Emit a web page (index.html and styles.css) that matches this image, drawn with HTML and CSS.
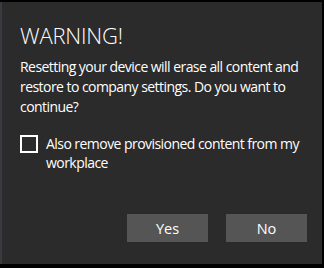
FILE: index.html
```html
<!DOCTYPE html>
<html>
<head>
<meta charset="utf-8">
<link rel="stylesheet" href="styles.css">
</head>
<body>
<div class="frame">
  <div class="dialog">
    <h1 class="title">WARNING!</h1>
    <p class="message">Resetting your device will erase all content and restore to company settings. Do you want to continue?</p>
    <label class="check">
      <span class="box"></span>
      <span class="check-text">Also remove provisioned content from my workplace</span>
    </label>
    <div class="actions">
      <button class="btn">Yes</button>
      <button class="btn">No</button>
    </div>
  </div>
</div>
</body>
</html>
```

FILE: styles.css
```css
html, body {
  margin: 0;
  padding: 0;
  width: 324px;
  height: 268px;
  background: #000;
  overflow: hidden;
}
.frame {
  box-sizing: border-box;
  width: 324px;
  height: 268px;
  padding: 2px 2px 4px 0;
  background: #000;
}
.dialog {
  box-sizing: border-box;
  height: 100%;
  background: #2b2b2b;
  border-left: 2px solid #3a3a40;
  padding: 19px 0 0 18px;
  font-family: "Open Sans", "Segoe UI", sans-serif;
  color: #fff;
  display: flex;
  flex-direction: column;
}
.title {
  margin: 0;
  font-size: 22px;
  font-weight: 300;
  line-height: 28px;
  letter-spacing: -0.2px;
}
.message {
  margin: 8px 0 0 0;
  font-size: 14px;
  line-height: 20px;
  letter-spacing: -0.55px;
  width: 290px;
}
.check {
  margin-top: 18px;
  display: flex;
  align-items: flex-start;
  gap: 8px;
}
.box {
  box-sizing: border-box;
  flex: none;
  width: 18px;
  height: 18px;
  border: 2px solid #fff;
  margin-top: 0;
}
.check-text {
  font-size: 14px;
  line-height: 19px;
  letter-spacing: -0.55px;
  width: 262px;
  margin-top: -1px;
}
.actions {
  margin-top: 42px;
  display: flex;
  gap: 18px;
  padding-left: 107px;
}
.btn {
  width: 81px;
  height: 28px;
  border: none;
  background: #555;
  color: #fff;
  font-family: "Open Sans", "Segoe UI", sans-serif;
  font-size: 14.5px;
  padding: 0;
}
```
